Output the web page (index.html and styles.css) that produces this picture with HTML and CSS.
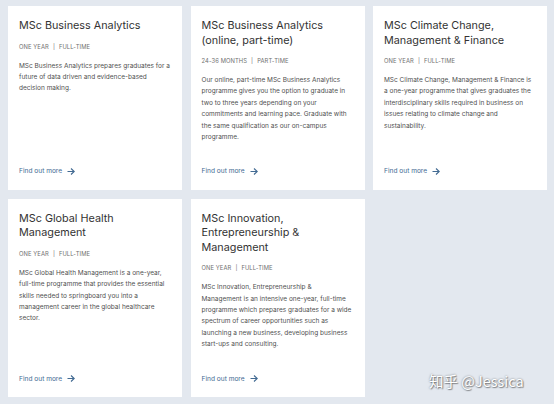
FILE: index.html
```html
<!DOCTYPE html>
<html>
<head>
<meta charset="utf-8">
<link rel="stylesheet" href="styles.css">
</head>
<body>
<div class="page">
  <div class="grid">
    <div class="card">
      <h3 class="title">MSc Business Analytics</h3>
      <div class="meta"><span>ONE YEAR</span><span class="sep">|</span><span>FULL-TIME</span></div>
      <p class="desc">MSc Business Analytics prepares graduates for a<br>future of data driven and evidence-based<br>decision making.</p>
      <a class="more">Find out more <svg class="arrow" viewBox="0 0 8 7" width="8" height="7"><path d="M0.5 3.5H7.2M4 0.5L7.2 3.5L4 6.5" fill="none" stroke="currentColor" stroke-width="1.1"/></svg></a>
    </div>
    <div class="card">
      <h3 class="title">MSc Business Analytics<br>(online, part-time)</h3>
      <div class="meta"><span>24-36 MONTHS</span><span class="sep">|</span><span>PART-TIME</span></div>
      <p class="desc">Our online, part-time MSc Business Analytics<br>programme gives you the option to graduate in<br>two to three years depending on your<br>commitments and learning pace. Graduate with<br>the same qualification as our on-campus<br>programme.</p>
      <a class="more">Find out more <svg class="arrow" viewBox="0 0 8 7" width="8" height="7"><path d="M0.5 3.5H7.2M4 0.5L7.2 3.5L4 6.5" fill="none" stroke="currentColor" stroke-width="1.1"/></svg></a>
    </div>
    <div class="card">
      <h3 class="title">MSc Climate Change,<br>Management &amp; Finance</h3>
      <div class="meta"><span>ONE YEAR</span><span class="sep">|</span><span>FULL-TIME</span></div>
      <p class="desc">MSc Climate Change, Management &amp; Finance is<br>a one-year programme that gives graduates the<br>interdisciplinary skills required in business on<br>issues relating to climate change and<br>sustainability.</p>
      <a class="more">Find out more <svg class="arrow" viewBox="0 0 8 7" width="8" height="7"><path d="M0.5 3.5H7.2M4 0.5L7.2 3.5L4 6.5" fill="none" stroke="currentColor" stroke-width="1.1"/></svg></a>
    </div>
    <div class="card">
      <h3 class="title">MSc Global Health<br>Management</h3>
      <div class="meta"><span>ONE YEAR</span><span class="sep">|</span><span>FULL-TIME</span></div>
      <p class="desc">MSc Global Health Management is a one-year,<br>full-time programme that provides the essential<br>skills needed to springboard you into a<br>management career in the global healthcare<br>sector.</p>
      <a class="more">Find out more <svg class="arrow" viewBox="0 0 8 7" width="8" height="7"><path d="M0.5 3.5H7.2M4 0.5L7.2 3.5L4 6.5" fill="none" stroke="currentColor" stroke-width="1.1"/></svg></a>
    </div>
    <div class="card">
      <h3 class="title">MSc Innovation,<br>Entrepreneurship &amp;<br>Management</h3>
      <div class="meta"><span>ONE YEAR</span><span class="sep">|</span><span>FULL-TIME</span></div>
      <p class="desc">MSc Innovation, Entrepreneurship &amp;<br>Management is an intensive one-year, full-time<br>programme which prepares graduates for a wide<br>spectrum of career opportunities such as<br>launching a new business, developing business<br>start-ups and consulting.</p>
      <a class="more">Find out more <svg class="arrow" viewBox="0 0 8 7" width="8" height="7"><path d="M0.5 3.5H7.2M4 0.5L7.2 3.5L4 6.5" fill="none" stroke="currentColor" stroke-width="1.1"/></svg></a>
    </div>
  </div>
  <div class="watermark">知乎 @Jessica</div>
</div>
</body>
</html>
```
FILE: styles.css
```css
html, body {
  margin: 0;
  padding: 0;
  background: #e3e8ef;
}
.page {
  position: relative;
  width: 554px;
  height: 404px;
  padding: 6px 7px 0 8px;
  box-sizing: border-box;
  font-family: Inter, "Noto Sans", sans-serif;
}
.grid {
  display: grid;
  grid-template-columns: 174px 174px 174px;
  column-gap: 8.5px;
  row-gap: 9px;
  align-items: start;
}
.card {
  background: #ffffff;
  padding: 13px 11px 13.3px 11px;
  display: flex;
  flex-direction: column;
  align-self: stretch;
}
.title {
  margin: 0;
  font-weight: 400;
  font-size: 10.8px;
  line-height: 14.5px;
  color: #333333;
}
.meta {
  margin-top: 8px;
  font-size: 5.8px;
  line-height: 9px;
  color: #707070;
  letter-spacing: 0.1px;
  display: flex;
}
.sep {
  margin: 0 4px;
}
.desc {
  margin: 10px 0 0 0;
  font-size: 6.5px;
  line-height: 11.4px;
  color: #505050;
}
.more {
  margin-top: auto;
  padding-top: 23px;
  font-size: 6.6px;
  line-height: 10px;
  color: #426a92;
  display: flex;
  align-items: center;
}
.arrow {
  margin-left: 5px;
}
.watermark {
  position: absolute;
  left: 429px;
  top: 372px;
  font-family: "Noto Sans CJK SC", "Noto Sans", sans-serif;
  font-size: 14.5px;
  line-height: 18px;
  color: #ffffff;
  text-shadow: 0 0 2px rgba(0,0,0,0.5), 1px 1px 1px rgba(0,0,0,0.35);
}
```
